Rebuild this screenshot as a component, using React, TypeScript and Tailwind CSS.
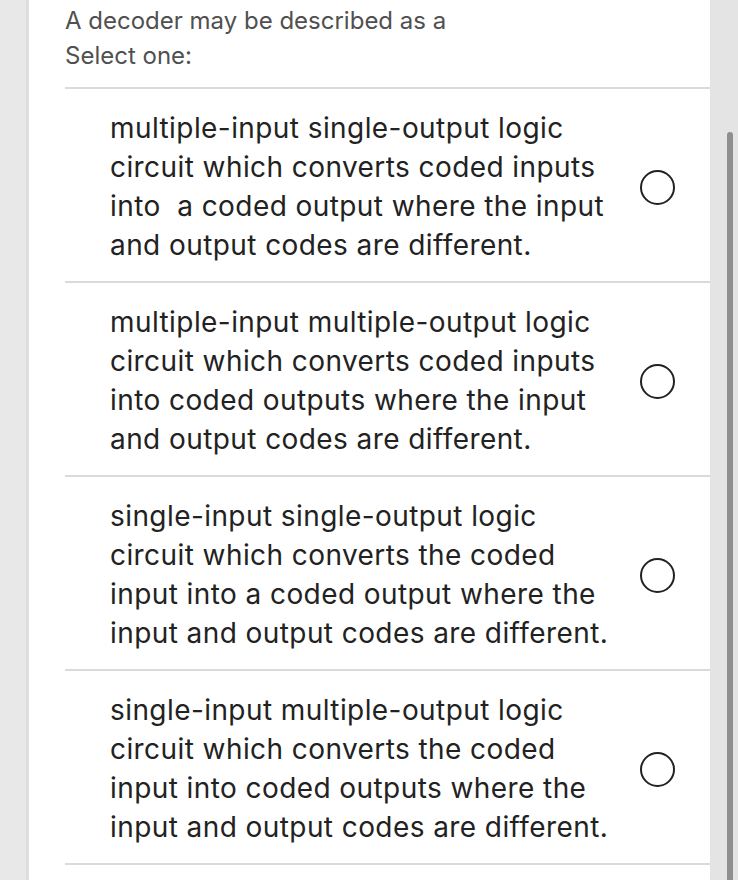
import React from "react";

const options: string[][] = [
  [
    "multiple-input single-output logic",
    "circuit which converts coded inputs",
    "into\u00a0 a coded output where the input",
    "and output codes are different.",
  ],
  [
    "multiple-input multiple-output logic",
    "circuit which converts coded inputs",
    "into coded outputs where the input",
    "and output codes are different.",
  ],
  [
    "single-input single-output logic",
    "circuit which converts the coded",
    "input into a coded output where the",
    "input and output codes are different.",
  ],
  [
    "single-input multiple-output logic",
    "circuit which converts the coded",
    "input into coded outputs where the",
    "input and output codes are different.",
  ],
];

export default function App() {
  return (
    <div
      className="flex h-[880px] w-[738px] overflow-hidden bg-[#e6e6e6]"
      style={{ fontFamily: "Inter, 'Noto Sans', Arial, sans-serif" }}
    >
      <div className="w-[26px] shrink-0 bg-[#e8e8e8]" />
      <div className="w-[3px] shrink-0 bg-[#dedede]" />
      <div className="w-[681px] shrink-0 bg-white">
        <div className="pl-[36px] pt-[3px]">
          <div className="text-[24px] leading-[35px] text-[#505050]">
            A decoder may be described as a
          </div>
          <div className="text-[24px] leading-[35px] text-[#505050]">Select one:</div>
          <div className="mt-[14px] border-t-2 border-[#dadada]">
            {options.map((lines, i) => (
              <div
                key={i}
                className="flex items-center border-b-2 border-[#dadada] pt-[20px] pb-[16px]"
              >
                <div className="ml-[45px] w-[530px] text-[28px] leading-[39px] tracking-[0.42px] text-[#222]">
                  {lines.map((l, j) => (
                    <div key={j} className="whitespace-nowrap">
                      {l}
                    </div>
                  ))}
                </div>
                <div className="h-[35px] w-[35px] shrink-0 rounded-full border-2 border-[#222]" />
              </div>
            ))}
          </div>
        </div>
      </div>
      <div className="relative flex-1 bg-[#e4e4e4]">
        <div className="absolute left-[17px] top-[132px] h-[760px] w-[6px] rounded-full bg-[#8f8f8f]" />
      </div>
    </div>
  );
}
